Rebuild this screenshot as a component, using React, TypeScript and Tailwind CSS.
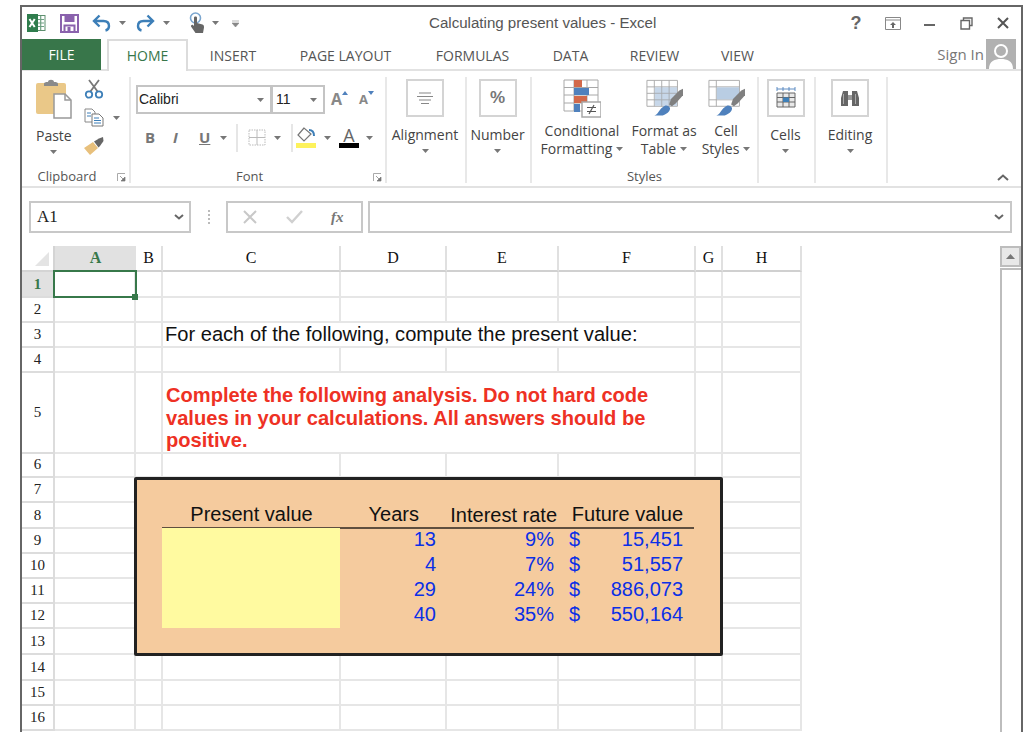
import React from "react";

const Caret = ({ className = "" }: { className?: string }) => (
  <svg width="7" height="4" viewBox="0 0 7 4" className={`shrink-0 ${className}`}>
    <path d="M0 0H7L3.5 4Z" fill="#777" />
  </svg>
);

const Launcher = ({ className = "" }: { className?: string }) => (
  <svg width="9" height="9" viewBox="0 0 9 9" className={className}>
    <path d="M.5 8V.5H8" fill="none" stroke="#aaa" />
    <path d="M3 3L7 7M8 4V8H4Z" fill="#777" stroke="#777" strokeWidth=".7" />
  </svg>
);

const ExcelLogo = () => (
  <svg width="20" height="20" viewBox="0 0 20 20">
    <rect x="7" y="2.5" width="12" height="15" fill="#fff" stroke="#5d8f6e" />
    <path d="M12 6.5H18M12 10H18M12 13.5H18M14.7 3V17" stroke="#6fa083" strokeWidth="1.2" />
    <rect x="1" y="1" width="11" height="18" fill="#2f7d4d" />
    <path d="M3.5 6L8.7 14M8.7 6L3.5 14" stroke="#fff" strokeWidth="2" />
  </svg>
);

const SaveIcon = () => (
  <svg width="19" height="19" viewBox="0 0 19 19">
    <path d="M1 1H18V18H1Z" fill="#fff" stroke="#8a62ad" strokeWidth="2" />
    <rect x="4.5" y="1.5" width="10" height="6.5" fill="#8a62ad" />
    <path d="M4.5 17.5V11.5H14.5V17.5" fill="none" stroke="#8a62ad" strokeWidth="2" />
    <rect x="7.5" y="13" width="3" height="4" fill="#8a62ad" />
  </svg>
);

const Undo = ({ flip = false }: { flip?: boolean }) => (
  <svg width="19" height="18" viewBox="0 0 19 18" className={flip ? "-scale-x-100" : ""}>
    <path d="M7.5 1.5L2 7L7.5 12.5M2.5 7H11.5C15 7 17 9 17 12C17 14.5 15.5 16 13.5 16.5" fill="none" stroke="#3d7fb8" strokeWidth="2.4" />
  </svg>
);

const TouchIcon = () => (
  <svg width="20" height="22" viewBox="0 0 20 22">
    <circle cx="7.5" cy="6" r="5" fill="none" stroke="#7ba6cf" strokeWidth="1.6" />
    <path d="M6 5.5C6 4 9 4 9 5.5V11L14.5 12.5C16 13 16 14 16 15.5L15 21H7.5L3 14.5C2.7 13.5 4 12.5 5 13L6 14Z" fill="#666" />
  </svg>
);

const RibbonBox = ({ children, className = "" }: { children: React.ReactNode; className?: string }) => (
  <div className={`w-[38px] h-[38px] border-2 border-[#d4d4d4] flex items-center justify-center ${className}`}>{children}</div>
);

const CfIcon = () => (
  <svg width="38" height="39" viewBox="0 0 38 39">
    <path d="M1 1H35V32H1ZM1 8.5H35M1 16H35M1 24H35M11 1V32M24 1V32" fill="#fff" stroke="#a8a8a8" />
    <rect x="11" y="1" width="8" height="7" fill="#d2694a" />
    <rect x="11" y="9" width="15" height="7" fill="#4f81bd" />
    <rect x="11" y="17" width="13" height="7" fill="#d2694a" />
    <rect x="11" y="25" width="6" height="8" fill="#4f81bd" />
    <rect x="19" y="23" width="19" height="15" fill="#fff" stroke="#a8a8a8" strokeWidth="1.5" />
    <path d="M24 28.5H33M24 32.5H33M31 26L26 35" stroke="#555" strokeWidth="1.2" />
  </svg>
);

const Brush = () => (
  <>
    <path d="M25 27L27 21L36 12L40 10V17L32 26L28 29Z" fill="#808080" />
    <path d="M9 39C13 38 14 33 18 30C21 27 25 28 26 31C26 35 22 37 18 39Z" fill="#4f81bd" />
  </>
);

const TableIcon = () => (
  <svg width="37" height="37" viewBox="0 0 40 39">
    <path d="M1 1H34V29H1ZM1 8H34M1 15H34M1 22H34M9 1V29M17 1V29M25 1V29" fill="#fff" stroke="#a8a8a8" />
    <rect x="9.5" y="8.500" width="24" height="20" fill="#b9cde3" opacity=".8" />
    <path d="M9 15H34M9 22H34M17 8V29M25 8V29" stroke="#a8a8a8" strokeWidth=".7" />
    <Brush />
  </svg>
);

const CellStyleIcon = () => (
  <svg width="37" height="37" viewBox="0 0 40 39">
    <path d="M1 1H34V29H1ZM1 8H34M1 22H34M9 1V29" fill="#fff" stroke="#a8a8a8" />
    <rect x="9.5" y="8.500" width="24" height="13" fill="#b9cde3" />
    <Brush />
  </svg>
);

const Group = ({ width, label, children, launcher, labelClass = "" }: { width: string; label?: string; children: React.ReactNode; launcher?: boolean; labelClass?: string }) => (
  <div className={`${width} mt-[6px] mb-[3px] border-r-2 border-[#e8e8e8] flex flex-col shrink-0`}>
    <div className="flex-1 min-h-0">{children}</div>
    <div className={`h-[12px] flex items-center justify-center relative text-[13px] text-[#555] ${labelClass}`}>
      {label}
      {launcher && <Launcher className="absolute right-[3px] top-[2px]" />}
    </div>
  </div>
);

const BigButton = ({ box, label }: { box: React.ReactNode; label: string }) => (
  <div className="flex flex-col items-center pt-[2px] pr-[2px]">
    <RibbonBox>{box}</RibbonBox>
    <div className="mt-[7px] leading-[22px] text-[14px] text-[#444]">{label}</div>
    <Caret className="mt-[3px]" />
  </div>
);

const StyleButton = ({ icon, l1, l2, w }: { icon: React.ReactNode; l1: string; l2: string; w: string }) => (
  <div className={`${w} flex flex-col items-center`}>
    <div className="h-[43px] flex items-start">{icon}</div>
    <div className="text-[14px] leading-[18px] text-[#444] text-center whitespace-nowrap">{l1}</div>
    <div className="text-[14px] leading-[18px] text-[#444] flex items-center gap-[4px] whitespace-nowrap">
      {l2}
      <Caret />
    </div>
  </div>
);

const V = () => <div className="w-[2px] h-[28px] bg-[#e6e6e6]" />;

const Ribbon = () => (
  <div className="h-[117px] border-b-2 border-[#e2e2e2] flex font-['Open_Sans',sans-serif]">
    <Group width="w-[109px]" label="Clipboard" launcher labelClass="pr-[17px]">
      <div className="flex pl-[13px] pt-[2px]">
        <div className="w-[49px] flex flex-col items-start">
          <svg width="37" height="40" viewBox="0 0 37 40">
            <rect x="1" y="4" width="30" height="31" rx="2" fill="#eac888" />
            <path d="M9 5C9 3 12 3 13 3C13 0 19 0 19 3C20 3 23 3 23 5V7H9Z" fill="#8a8a8a" />
            <path d="M19 15H30L36 21V39H19Z" fill="#fff" stroke="#999" strokeWidth="1.5" />
            <path d="M30 15V21H36" fill="none" stroke="#999" strokeWidth="1.5" />
          </svg>
          <div className="mt-[6px] ml-[1px] text-[14px] leading-[22px] text-[#444]">Paste</div>
          <Caret className="ml-[15px] mt-[3px]" />
        </div>
        <div className="flex flex-col">
          <svg width="20" height="20" viewBox="0 0 20 20">
            <path d="M5 1L14 13M15 1L6 13" stroke="#777" strokeWidth="1.8" />
            <circle cx="5" cy="15.5" r="3.2" fill="none" stroke="#3d7fb8" strokeWidth="1.8" />
            <circle cx="15" cy="15.5" r="3.2" fill="none" stroke="#3d7fb8" strokeWidth="1.8" />
          </svg>
          <div className="flex items-center mt-[9px]">
            <svg width="20" height="19" viewBox="0 0 20 19">
              <path d="M1 1H8L11 4V14H1Z" fill="#fff" stroke="#888" />
              <path d="M3 5H7M3 8H7" stroke="#3d7fb8" />
              <path d="M8 6H15L19 10V18H8Z" fill="#fff" stroke="#777" />
              <path d="M10 10H15M10 12.5H17M10 15H17" stroke="#3d7fb8" />
            </svg>
            <Caret className="ml-[9px]" />
          </div>
          <svg width="20" height="18" viewBox="0 0 20 18" className="mt-[10px]">
            <path d="M0 11L9 5L14 11L6 18C4 16 2 13 0 11Z" fill="#e8c07c" />
            <path d="M10 4.5L15 1.5L19 0L19.5 4L16 9L14.5 10.5Z" fill="#666" />
          </svg>
        </div>
      </div>
    </Group>

    <Group width="w-[256px]" label="Font" launcher labelClass="pr-[17px]">
      <div className="pl-[5px] pt-[8px]">
        <div className="flex items-start h-[29px] font-['Liberation_Sans',sans-serif] text-[14px] text-[#222]">
          <div className="w-[136px] h-[29px] border-2 border-[#c4c4c4] flex items-center justify-between pl-[1px] pr-[6px]">
            Calibri <Caret />
          </div>
          <div className="w-[54px] h-[29px] -ml-[1px] border-2 border-[#c4c4c4] flex items-center justify-between pl-[3px] pr-[6px]">
            11 <Caret />
          </div>
          <div className="ml-[6px] mt-[3px] w-[18px] flex items-start">
            <span className="font-['Open_Sans',sans-serif] font-bold text-[16px] leading-[22px] text-[#888]">A</span>
            <svg width="6" height="4" viewBox="0 0 6 4" className="mt-[3px]">
              <path d="M0 4L3 0L6 4Z" fill="#4f81bd" />
            </svg>
          </div>
          <div className="ml-[10px] mt-[3px] w-[18px] flex items-start">
            <span className="font-['Open_Sans',sans-serif] font-bold text-[13px] leading-[23px] text-[#888]">A</span>
            <svg width="6" height="4" viewBox="0 0 6 4" className="mt-[3px]">
              <path d="M0 0H6L3 4Z" fill="#4f81bd" />
            </svg>
          </div>
        </div>
        <div className="flex items-center mt-[9px] h-[29px] text-[#777] font-['Open_Sans',sans-serif] font-bold text-[15px]">
          <span className="ml-[9px] w-[28px]">B</span>
          <span className="w-[26px] italic">I</span>
          <span className="w-[16px] underline">U</span>
          <Caret className="ml-[5px] mr-[9px]" />
          <V />
          <svg width="18" height="17" viewBox="0 0 18 17" className="ml-[10px]">
            <path d="M1 1H17V16H1Z" fill="none" stroke="#bbb" strokeDasharray="1.5 1" />
            <path d="M1 8.5H17M9 1V16" fill="none" stroke="#bbb" />
          </svg>
          <Caret className="ml-[8px] mr-[10px]" />
          <V />
          <div className="ml-[3px] w-[20px] flex flex-col items-center">
            <svg width="20" height="16" viewBox="0 0 20 16">
              <path d="M8 1L2 8L8 14L15 7Z" fill="#fff" stroke="#777" strokeWidth="1.2" />
              <path d="M13 3C17 3 18 6 18 9" fill="none" stroke="#3d7fb8" strokeWidth="2" />
            </svg>
            <div className="w-[20px] h-[5px] bg-[#fdf25c]" />
          </div>
          <Caret className="ml-[8px] mr-[8px]" />
          <div className="w-[20px] flex flex-col items-center">
            <span className="font-['Open_Sans',sans-serif] font-normal text-[18px] leading-[16px] text-[#666]">A</span>
            <div className="w-[20px] h-[5px] bg-black" />
          </div>
          <Caret className="ml-[7px]" />
        </div>
      </div>
    </Group>

    <Group width="w-[80px]">
      <BigButton
        label="Alignment"
        box={
          <svg width="16" height="12" viewBox="0 0 16 12">
            <path d="M2 1H14M0 4.500H16M2 8H14M4 11.500H12" stroke="#888" strokeWidth="1.200" />
          </svg>
        }
      />
    </Group>

    <Group width="w-[65px]">
      <BigButton label="Number" box={<span className="text-[17px] font-bold text-[#777] font-['Liberation_Sans',sans-serif]">%</span>} />
    </Group>

    <Group width="w-[227px]" label="Styles">
      <div className="flex pt-[2px]">
        <StyleButton w="w-[100px]" icon={<CfIcon />} l1="Conditional" l2="Formatting" />
        <StyleButton w="w-[64px]" icon={<TableIcon />} l1="Format as" l2="Table" />
        <StyleButton w="w-[60px]" icon={<CellStyleIcon />} l1="Cell" l2="Styles" />
      </div>
    </Group>

    <Group width="w-[57px]">
      <BigButton
        label="Cells"
        box={
          <svg width="20" height="22" viewBox="0 0 20 22">
            <path d="M1 2H19M1 0V4M19 0V4M7 0V4M13 0V4" stroke="#4f81bd" strokeWidth=".9" />
            <path d="M1 6H19V20H1ZM1 10.500H19M1 15H19M7 6V20M13 6V20" fill="#e8e8e8" stroke="#666" />
            <rect x="7" y="10.500" width="6" height="4.500" fill="#3d7fb8" />
          </svg>
        }
      />
    </Group>

    <Group width="w-[72px]">
      <BigButton
        label="Editing"
        box={
          <svg width="20" height="18" viewBox="0 0 20 18">
            <path d="M1 17V9L3 2H8V17ZM12 17V2H17L19 9V17Z" fill="#666" />
            <path d="M8 6H12V11H8Z" fill="#999" />
            <path d="M3.500 5V15M15.500 5V15" stroke="#aaa" />
          </svg>
        }
      />
    </Group>

    <div className="flex-1 flex items-end justify-end pr-[12px] pb-[5px]">
      <svg width="12" height="7" viewBox="0 0 12 7">
        <path d="M1 6L6 1.500L11 6" fill="none" stroke="#666" strokeWidth="2" />
      </svg>
    </div>
  </div>
);

const Chevron = ({ className = "" }: { className?: string }) => (
  <svg width="10" height="6" viewBox="0 0 10 6" className={className}>
    <path d="M1 1L5 4.500L9 1" fill="none" stroke="#666" strokeWidth="2" />
  </svg>
);

const FormulaBar = () => (
  <div className="mt-[13px] h-[32px] flex pl-[7px] shrink-0">
    <div className="w-[162px] border-2 border-[#c8c8c8] flex items-center justify-between pl-[6px] pr-[5px] font-['Liberation_Serif',serif] text-[17px] text-[#222]">
      A1
      <Chevron />
    </div>
    <div className="w-[35px] flex flex-col items-center justify-center gap-[2px]">
      <i className="w-[2px] h-[2px] bg-[#bbb]" />
      <i className="w-[2px] h-[2px] bg-[#bbb]" />
      <i className="w-[2px] h-[2px] bg-[#bbb]" />
      <i className="w-[2px] h-[2px] bg-[#bbb]" />
    </div>
    <div className="w-[137px] border-2 border-[#c8c8c8] flex items-center pl-[15px]">
      <svg width="14" height="14" viewBox="0 0 14 14">
        <path d="M1 1L13 13M13 1L1 13" stroke="#c8c8c8" strokeWidth="2" />
      </svg>
      <svg width="17" height="14" viewBox="0 0 17 14" className="ml-[29px]">
        <path d="M1 7L6 12L16 1" fill="none" stroke="#d0d0d0" strokeWidth="2.400" />
      </svg>
      <span className="ml-[28px] font-['Liberation_Serif',serif] italic font-bold text-[15px] text-[#777]">fx</span>
    </div>
    <div className="ml-[5px] w-[644px] border-2 border-[#c8c8c8] flex items-center justify-end pr-[6px]">
      <Chevron />
    </div>
  </div>
);

const GRID = "grid grid-cols-[33px_81px_27px_178px_106px_112px_137px_27px_79px]";
const LINE = "border-r-2 border-b-2 border-[#e6e6e6]";

const rows: { n: number; h: string; merged?: React.ReactNode }[] = [
  { n: 1, h: "h-[26px]" },
  { n: 2, h: "h-[25px]" },
  {
    n: 3,
    h: "h-[25px]",
    merged: <div className="pl-[2px] text-[20.100px] leading-[23px] text-[#111] whitespace-nowrap">For each of the following, compute the present value:</div>,
  },
  { n: 4, h: "h-[25px]" },
  {
    n: 5,
    h: "h-[79px]",
    merged: (
      <div className="pl-[3px] pt-[11px] text-[20.100px] leading-[22.500px] font-bold text-[#ee3124] whitespace-nowrap">
        Complete the following analysis. Do not hard code
        <br />
        values in your calculations. All answers should be
        <br />
        positive.
      </div>
    ),
  },
  { n: 6, h: "h-[26px]" },
  { n: 7, h: "h-[25px]" },
  { n: 8, h: "h-[26px]" },
  { n: 9, h: "h-[25px]" },
  { n: 10, h: "h-[25px]" },
  { n: 11, h: "h-[25px]" },
  { n: 12, h: "h-[25px]" },
  { n: 13, h: "h-[26px]" },
  { n: 14, h: "h-[26px]" },
  { n: 15, h: "h-[25px]" },
  { n: 16, h: "h-[25px]" },
];

const data = [
  ["13", "9%", "15,451"],
  ["4", "7%", "51,557"],
  ["29", "24%", "886,073"],
  ["40", "35%", "550,164"],
];

const FloatingBox = () => (
  <div className="absolute left-[112px] top-[231px] w-[589px] h-[179px] bg-[#f5cb9e] border-[3px] border-[#222] rounded-[2px] pl-[25px] pt-[23px] font-['Liberation_Sans',sans-serif] text-[20px]">
    <div className="w-[532px] h-[26px] border-b-2 border-[#5f4f3f] grid grid-cols-[179px_78px_138px_126px] leading-[22px] text-[#111] whitespace-nowrap">
      <div className="text-center">Present value</div>
      <div className="text-right">Years</div>
      <div className="text-right pt-[1px]">Interest rate</div>
      <div className="text-right">Future value</div>
    </div>
    <div className="-mt-[1px] grid grid-cols-[178px_96px_118px_26px_103px] grid-rows-[25px_25px_25px_25px] text-[#0b30e6] leading-[22px]">
      <div className="row-span-4 bg-[#fffaa0]" />
      {data.map((d) => (
        <React.Fragment key={d[0]}>
          <div className="text-right">{d[0]}</div>
          <div className="text-right">{d[1]}</div>
          <div className="text-right">$</div>
          <div className="text-right">{d[2]}</div>
        </React.Fragment>
      ))}
    </div>
  </div>
);

const Sheet = () => (
  <div className="relative w-[780px] font-['Liberation_Serif',serif] text-[15px] text-[#222]">
    <div className={`${GRID} h-[26px] text-[16px]`}>
      <div className="border-r-2 border-b-2 border-[#d4d4d4] flex items-end justify-end pr-[4px] pb-[4px]">
        <svg width="14" height="14" viewBox="0 0 14 14">
          <path d="M14 0V14H0Z" fill="#e4e4e4" />
        </svg>
      </div>
      <div className="bg-[#e1e1e1] border-b-2 border-[#d0d0d0] flex items-center justify-center text-[#37784a] font-bold">A</div>
      {["B", "C", "D", "E", "F", "G", "H"].map((c) => (
        <div key={c} className="border-r-2 border-b-2 border-[#e0e0e0] border-b-[#d0d0d0] flex items-center justify-center text-[#111]">
          {c}
        </div>
      ))}
    </div>
    {rows.map((r) => (
      <div key={r.n} className={`${GRID} ${r.h}`}>
        <div className={`${r.n === 1 ? "bg-[#e1e1e1] text-[#37784a] font-bold" : ""} border-r-2 border-b-2 border-[#dcdcdc] flex items-center justify-center`}>{r.n}</div>
        <div className={LINE} />
        <div className={LINE} />
        {r.merged ? (
          <div className={`col-span-4 font-['Liberation_Sans',sans-serif] ${LINE}`}>{r.merged}</div>
        ) : (
          <>
            <div className={LINE} />
            <div className={LINE} />
            <div className={LINE} />
            <div className={LINE} />
          </>
        )}
        <div className={LINE} />
        <div className={LINE} />
      </div>
    ))}
    <div className="absolute left-[31px] top-[24px] w-[84px] h-[28px] border-2 border-[#37784a]" />
    <div className="absolute left-[110px] top-[48px] w-[6px] h-[6px] bg-[#37784a]" />
    <FloatingBox />
  </div>
);

export default function App() {
  return (
    <div className="w-[1024px] h-[732px] bg-white overflow-hidden pl-[20px] pt-[5px] font-['Open_Sans',sans-serif]">
      <div className="w-[1003px] h-[727px] border-2 border-b-0 border-[#666] flex flex-col overflow-hidden">
        <div className="h-[32px] shrink-0 flex items-center">
          <div className="w-[407px] flex items-center pl-[4px]">
            <ExcelLogo />
            <span className="ml-[14px]"><SaveIcon /></span>
            <span className="ml-[13px]"><Undo /></span>
            <Caret className="ml-[8px]" />
            <span className="ml-[10px]"><Undo flip /></span>
            <Caret className="ml-[8px]" />
            <span className="ml-[18px]"><TouchIcon /></span>
            <Caret className="ml-[4px]" />
            <svg width="7" height="7" viewBox="0 0 7 7" className="ml-[13px]">
              <path d="M0 1H7M0 3H7L3.500 7Z" fill="#888" stroke="#888" strokeWidth=".6" />
            </svg>
          </div>
          <div className="font-['Liberation_Sans',sans-serif] text-[15.100px] text-[#555] whitespace-nowrap">Calculating present values - Excel</div>
          <div className="ml-auto flex items-center">
            <span className="w-[12px] text-center font-['Liberation_Sans',sans-serif] font-bold text-[18px] text-[#666]">?</span>
            <svg width="16" height="13" viewBox="0 0 16 13" className="ml-[23px]">
              <path d="M.5 .5H15.500V12.500H.5ZM.5 3H15.500" fill="none" stroke="#888" />
              <path d="M8 5L5 8H7V11H9V8H11Z" fill="#666" />
            </svg>
            <div className="ml-[23px] w-[11px] h-[2px] mt-[4px] bg-[#666]" />
            <svg width="13" height="13" viewBox="0 0 13 13" className="ml-[25px]">
              <path d="M3.500 3V1H12V8.500H9.500M1 3.500H9.500V12H1Z" fill="none" stroke="#666" strokeWidth="1.400" />
            </svg>
            <svg width="12" height="12" viewBox="0 0 12 12" className="ml-[24px] mr-[12px]">
              <path d="M1 1L11 11M11 1L1 11" stroke="#555" strokeWidth="2" />
            </svg>
          </div>
        </div>

        <div className="h-[32px] shrink-0 flex text-[14px] text-[#555] border-b-2 border-[#e2e2e2]">
          <div className="w-[79px] h-[31px] bg-[#38764a] text-white flex items-center justify-center">FILE</div>
          <div className="ml-[6px] w-[81px] h-[32px] pb-[2px] bg-white border-2 border-b-0 border-[#dcdcdc] flex items-center justify-center text-[#38764a] relative z-10">HOME</div>
          <div className="w-[90px] pt-[2px] flex items-center justify-center">INSERT</div>
          <div className="w-[135px] pt-[2px] flex items-center justify-center">PAGE LAYOUT</div>
          <div className="w-[119px] pt-[2px] flex items-center justify-center">FORMULAS</div>
          <div className="w-[77px] pt-[2px] flex items-center justify-center">DATA</div>
          <div className="w-[91px] pt-[2px] flex items-center justify-center">REVIEW</div>
          <div className="w-[75px] pt-[2px] flex items-center justify-center">VIEW</div>
          <div className="ml-auto flex items-center mr-[5px]">
            <span className="text-[#777] text-[15px]">Sign In</span>
            <div className="ml-[2px] w-[30px] h-[30px] bg-[#b1b1b1] overflow-hidden flex items-end justify-center">
              <svg width="30" height="30" viewBox="0 0 30 30">
                <circle cx="15" cy="12" r="7" fill="#fff" />
                <path d="M3 30C3 22 9 20 15 20C21 20 27 22 27 30Z" fill="#fff" />
                <circle cx="15" cy="12" r="5" fill="#b1b1b1" />
              </svg>
            </div>
          </div>
        </div>

        <Ribbon />
        <FormulaBar />

        <div className="mt-[13px] flex justify-between flex-1 min-h-0">
          <Sheet />
          <div className="w-[21px] flex flex-col">
            <div className="h-[21px] bg-[#e8e8e8] border-2 border-[#bdbdbd] flex items-center justify-center">
              <svg width="9" height="5" viewBox="0 0 9 5">
                <path d="M0 5L4.500 0L9 5Z" fill="#777" />
              </svg>
            </div>
            <div className="mt-[1px] flex-1 border-2 border-r-0 border-b-0 border-[#bdbdbd]" />
          </div>
        </div>
      </div>
    </div>
  );
}
